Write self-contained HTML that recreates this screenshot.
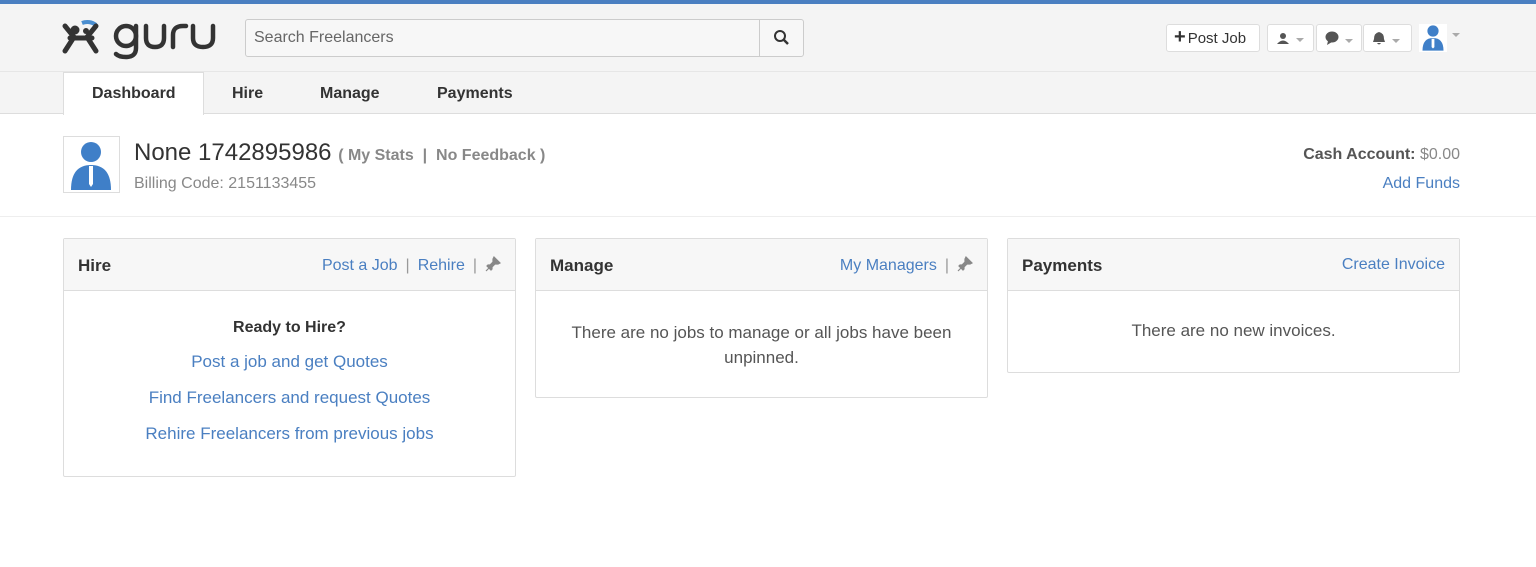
<!DOCTYPE html>
<html><head><style>
*{box-sizing:border-box;margin:0;padding:0}
body{width:1536px;height:567px;overflow:hidden;background:#fff;font-family:"Liberation Sans",sans-serif;color:#333;position:relative}
.a{position:absolute}
a{color:#4a7fc1;text-decoration:none}
.top{left:0;top:0;width:1536px;height:4px;background:#4a7fc1}
.hdr{left:0;top:4px;width:1536px;height:110px;background:#f4f4f4;border-bottom:1px solid #ddd}
.srch{left:245px;top:19px;width:515px;height:38px;border:1px solid #ccc;background:#f7f7f7;border-radius:3px 0 0 3px;font-size:16px;color:#666;padding:9px 8px}
.sbtn{left:759px;top:19px;width:45px;height:38px;border:1px solid #ccc;background:#f7f7f7;border-radius:0 3px 3px 0}
.btn{top:24px;height:28px;border:1px solid #ddd;background:#fff;border-radius:3px;white-space:nowrap}
.navline{left:0;top:71px;width:1536px;height:1px;background:#e6e6e6}
.tab{top:85px;font-size:16px;font-weight:bold;color:#333}
.dash{left:63px;top:72px;width:141px;height:43px;background:#fff;border:1px solid #ddd;border-bottom:none}
.panel{top:238px;width:453px;border:1px solid #ddd;border-radius:2px;background:#fff}
.ph{height:52px;background:#f7f7f7;border-bottom:1px solid #ddd;position:relative}
.ph b{position:absolute;left:14px;top:17px;font-size:17px;color:#333}
.pl{position:absolute;right:14px;top:17px;font-size:16px;color:#4a7fc1;white-space:nowrap}
.sep{color:#999;margin:0 8px}
.body{text-align:center;font-size:17px;color:#555}
.caret{display:inline-block;border-left:4px solid transparent;border-right:4px solid transparent;border-top:4px solid #aaa;vertical-align:middle;margin-left:6px}
.pin{display:inline-block;vertical-align:-2px}
</style></head><body>
<div class="a top"></div>
<div class="a hdr"></div>
<div class="a navline"></div>
<svg class="a" style="left:62px;top:15px" width="160" height="45" viewBox="0 0 160 45">
<path d="M20 8 A14 14 0 0 1 34 10" stroke="#4a8ed0" stroke-width="4" fill="none"/>
<circle cx="13" cy="15" r="4.5" fill="#333"/>
<path d="M3 11 L12 22 L3 36 M34 11 L25 22 L34 36 M8 23 L30 23" stroke="#333" stroke-width="5" fill="none" stroke-linecap="round"/>
<circle cx="24" cy="16" r="3" fill="#333"/>
<g stroke="#333" stroke-width="4.5" fill="none" stroke-linecap="round">
<circle cx="64" cy="21" r="10"/>
<path d="M74 11 L74 33 Q74 42 64 42 Q57 42 54 39"/>
<path d="M84 11 L84 23 Q84 32 93 32 Q102 32 102 23 L102 11"/>
<path d="M111 32 L111 20 Q111 11 121 11 L124 11"/>
<path d="M131 11 L131 23 Q131 32 141 32 Q151 32 151 23 L151 11"/>
</g>
</svg>
<div class="a srch">Search Freelancers</div>
<div class="a sbtn"><svg width="45" height="36" viewBox="0 0 45 36"><circle cx="20" cy="16" r="5" stroke="#333" stroke-width="2" fill="none"/><path d="M24 20 L28 24" stroke="#333" stroke-width="2.5"/></svg></div>
<div class="a btn" style="left:1166px;width:94px;font-size:15px;padding:4px 7px;color:#333"><b style="font-size:20px;line-height:16px;margin-right:2px">+</b>Post Job</div>
<div class="a btn" style="left:1267px;width:47px;padding:6px 8px"><svg width="14" height="12"><circle cx="7" cy="4" r="3" fill="#555"/><path d="M1 12 Q7 5 13 12Z" fill="#555"/></svg><span class="caret"></span></div>
<div class="a btn" style="left:1316px;width:46px;padding:6px 8px"><svg width="14" height="14"><ellipse cx="7" cy="6" rx="6.5" ry="5.5" fill="#555"/><path d="M3 10 L2 14 L7 11Z" fill="#555"/></svg><span class="caret"></span></div>
<div class="a btn" style="left:1363px;width:49px;padding:6px 8px"><svg width="14" height="14"><path d="M7 1 Q12 2 12 8 L13 11 L1 11 L2 8 Q2 2 7 1Z M5 12 L9 12 Q7 15 5 12Z" fill="#555"/></svg><span class="caret"></span></div>
<svg class="a" style="left:1419px;top:23px" width="28" height="30" viewBox="0 0 40 40"><rect width="40" height="40" fill="#fff"/><circle cx="20" cy="10" r="8" fill="#3f7fc8"/><path d="M5 38 Q5 20 20 20 Q35 20 35 38Z" fill="#3f7fc8"/><path d="M18 21 L22 21 L22 33 L20 35 L18 33Z" fill="#fff"/></svg>
<span class="a caret" style="left:1446px;top:33px"></span>
<div class="a dash"></div>
<div class="a tab" style="left:92px">Dashboard</div>
<div class="a tab" style="left:232px">Hire</div>
<div class="a tab" style="left:320px">Manage</div>
<div class="a tab" style="left:437px">Payments</div>
<div class="a" style="left:0;top:216px;width:1536px;height:1px;background:#eee"></div>
<svg class="a" style="left:63px;top:136px" width="57" height="57" viewBox="0 0 57 57"><rect x="0.5" y="0.5" width="56" height="56" fill="#fff" stroke="#ddd"/><circle cx="28" cy="16" r="10" fill="#3f7fc8"/><path d="M8 54 Q8 29 28 29 Q48 29 48 54Z" fill="#3f7fc8"/><path d="M26 30 L30 30 L30 48 L28 51 L26 48Z" fill="#fff"/></svg>
<div class="a" style="left:134px;top:139px;font-size:24px;color:#333">None 1742895986 <span style="font-size:16px;color:#888;font-weight:bold">( My Stats &nbsp;| &nbsp;No Feedback )</span></div>
<div class="a" style="left:134px;top:175px;font-size:16px;color:#888">Billing Code: 2151133455</div>
<div class="a" style="right:76px;top:146px;font-size:16px;color:#555"><b>Cash Account:</b> <span style="color:#888">$0.00</span></div>
<div class="a" style="right:76px;top:175px;font-size:16px"><a>Add Funds</a></div>
<div class="a panel" style="left:63px;height:239px"><div class="ph"><b>Hire</b><span class="pl">Post a Job<span class="sep">|</span>Rehire<span class="sep">|</span><svg class="pin" width="16" height="16" viewBox="0 0 16 16"><path d="M9 1 L15 7 L13 8 L10 8 L7 11 L7 13 L6 14 L2 10 L3 9 L5 9 L8 6 L8 3Z M4 12 L1 15" fill="#888" stroke="#888" stroke-width="1.2"/></svg></span></div>
<div class="body"><div style="margin-top:28px;font-weight:bold;color:#333;font-size:16px">Ready to Hire?</div>
<div style="margin-top:15px"><a>Post a job and get Quotes</a></div><div style="margin-top:16px"><a>Find Freelancers and request Quotes</a></div><div style="margin-top:16px"><a>Rehire Freelancers from previous jobs</a></div></div></div>
<div class="a panel" style="left:535px;height:160px"><div class="ph"><b>Manage</b><span class="pl">My Managers<span class="sep">|</span><svg class="pin" width="16" height="16" viewBox="0 0 16 16"><path d="M9 1 L15 7 L13 8 L10 8 L7 11 L7 13 L6 14 L2 10 L3 9 L5 9 L8 6 L8 3Z M4 12 L1 15" fill="#888" stroke="#888" stroke-width="1.2"/></svg></span></div>
<div class="body" style="padding:29px 20px;line-height:25px">There are no jobs to manage or all jobs have been unpinned.</div></div>
<div class="a panel" style="left:1007px;height:135px"><div class="ph"><b>Payments</b><span class="pl" style="top:17px">Create Invoice</span></div>
<div class="body" style="padding-top:30px">There are no new invoices.</div></div>
</body></html>
